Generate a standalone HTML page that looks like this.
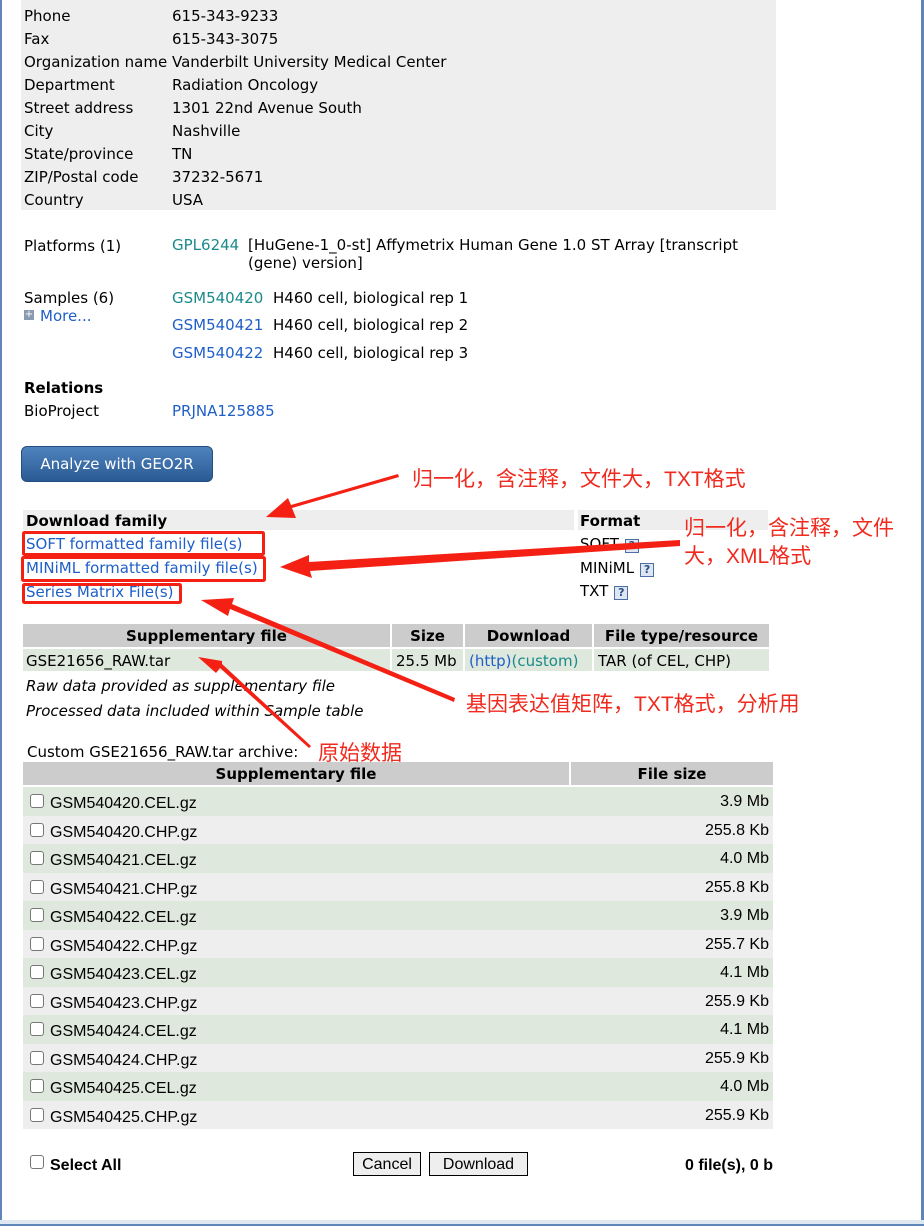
<!DOCTYPE html>
<html><head><meta charset="utf-8">
<style>
*{margin:0;padding:0;box-sizing:border-box}
body{width:924px;height:1226px;background:#fff;position:relative;overflow:hidden;font-family:"DejaVu Sans","Liberation Sans",sans-serif;font-size:15px;color:#000}
.a{position:absolute;white-space:nowrap;line-height:18px}
.t{color:#1a8a8a}.b{color:#1f5fc8}
.bx{position:absolute}
.cz{font-family:"Liberation Sans",sans-serif;font-size:16px}
.cb{position:absolute;width:14px;height:14px;border:1px solid #777;border-radius:3px;background:#fff}
.red{position:absolute;color:#f02a1e;font-family:"Liberation Sans","Noto Sans CJK SC",sans-serif;font-size:21px;white-space:nowrap;line-height:26px}
.q{display:inline-block;width:14px;height:14px;border:1px solid #4a6fa0;background:#dde6f2;color:#2d4e80;font-size:11px;line-height:12px;text-align:center;font-weight:bold;vertical-align:0px;margin-left:6px}
</style></head><body>
<div class="bx" style="left:0;top:0;width:2px;height:1226px;background:#5f86b8"></div>
<div class="bx" style="left:921px;top:0;width:3px;height:1226px;background:#5f86b8"></div>
<div class="bx" style="left:0;top:1220px;width:924px;height:6px;background:#dfe8f0;border-bottom:2px solid #5f86b8"></div>

<div class="bx" style="left:21px;top:0;width:755px;height:210px;background:#eeeeee"></div>
<div class="a" style="left:24px;top:7px">Phone</div><div class="a" style="left:172px;top:7px">615-343-9233</div>
<div class="a" style="left:24px;top:30px">Fax</div><div class="a" style="left:172px;top:30px">615-343-3075</div>
<div class="a" style="left:24px;top:53px">Organization name</div><div class="a" style="left:172px;top:53px">Vanderbilt University Medical Center</div>
<div class="a" style="left:24px;top:76px">Department</div><div class="a" style="left:172px;top:76px">Radiation Oncology</div>
<div class="a" style="left:24px;top:99px">Street address</div><div class="a" style="left:172px;top:99px">1301 22nd Avenue South</div>
<div class="a" style="left:24px;top:122px">City</div><div class="a" style="left:172px;top:122px">Nashville</div>
<div class="a" style="left:24px;top:145px">State/province</div><div class="a" style="left:172px;top:145px">TN</div>
<div class="a" style="left:24px;top:168px">ZIP/Postal code</div><div class="a" style="left:172px;top:168px">37232-5671</div>
<div class="a" style="left:24px;top:191px">Country</div><div class="a" style="left:172px;top:191px">USA</div>

<div class="a" style="left:24px;top:237px">Platforms (1)</div>
<div class="a t" style="left:172px;top:236px">GPL6244</div>
<div class="a" style="left:248px;top:236px">[HuGene-1_0-st] Affymetrix Human Gene 1.0 ST Array [transcript</div>
<div class="a" style="left:248px;top:254px">(gene) version]</div>

<div class="a" style="left:24px;top:289px">Samples (6)</div>
<div class="bx" style="left:24px;top:310px;width:10px;height:10px;background:#8a9ab0;color:#fff;font-size:10px;line-height:10px;text-align:center">+</div>
<div class="a b" style="left:40px;top:307px">More...</div>
<div class="a t" style="left:172px;top:289px">GSM540420</div><div class="a" style="left:273px;top:289px">H460 cell, biological rep 1</div>
<div class="a b" style="left:172px;top:316px">GSM540421</div><div class="a" style="left:273px;top:316px">H460 cell, biological rep 2</div>
<div class="a b" style="left:172px;top:344px">GSM540422</div><div class="a" style="left:273px;top:344px">H460 cell, biological rep 3</div>

<div class="a" style="left:24px;top:379px;font-weight:bold">Relations</div>
<div class="a" style="left:24px;top:402px">BioProject</div><div class="a b" style="left:172px;top:402px">PRJNA125885</div>

<div class="bx" style="left:21px;top:446px;width:192px;height:36px;border-radius:6px;background:linear-gradient(#4f83bd,#2a5a94);border:1px solid #244d80;color:#fff;text-align:center;line-height:34px;font-size:15px">Analyze with GEO2R</div>

<div class="bx" style="left:23px;top:510px;width:551px;height:20px;background:#eeeeee"></div>
<div class="bx" style="left:578px;top:510px;width:190px;height:20px;background:#eeeeee"></div>
<div class="a" style="left:26px;top:512px;font-weight:bold">Download family</div>
<div class="a" style="left:580px;top:512px;font-weight:bold">Format</div>
<div class="a b" style="left:26px;top:535px">SOFT formatted family file(s)</div>
<div class="a b" style="left:26px;top:559px">MINiML formatted family file(s)</div>
<div class="a b" style="left:26px;top:583px">Series Matrix File(s)</div>
<div class="a" style="left:580px;top:535px">SOFT<span class="q">?</span></div>
<div class="a" style="left:580px;top:559px">MINiML<span class="q">?</span></div>
<div class="a" style="left:580px;top:582px">TXT<span class="q">?</span></div>

<div class="bx" style="left:23px;top:624px;width:367px;height:23px;background:#cccccc"></div>
<div class="bx" style="left:392px;top:624px;width:71px;height:23px;background:#cccccc"></div>
<div class="bx" style="left:465px;top:624px;width:127px;height:23px;background:#cccccc"></div>
<div class="bx" style="left:594px;top:624px;width:175px;height:23px;background:#cccccc"></div>
<div class="a" style="left:23px;top:627px;width:367px;text-align:center;font-weight:bold">Supplementary file</div>
<div class="a" style="left:392px;top:627px;width:71px;text-align:center;font-weight:bold">Size</div>
<div class="a" style="left:465px;top:627px;width:127px;text-align:center;font-weight:bold">Download</div>
<div class="a" style="left:594px;top:627px;width:175px;text-align:center;font-weight:bold">File type/resource</div>
<div class="bx" style="left:23px;top:649px;width:367px;height:22px;background:#dfe8dc"></div>
<div class="bx" style="left:392px;top:649px;width:71px;height:22px;background:#dfe8dc"></div>
<div class="bx" style="left:465px;top:649px;width:127px;height:22px;background:#dfe8dc"></div>
<div class="bx" style="left:594px;top:649px;width:175px;height:22px;background:#dfe8dc"></div>
<div class="a" style="left:26px;top:652px">GSE21656_RAW.tar</div>
<div class="a" style="left:396px;top:652px">25.5 Mb</div>
<div class="a" style="left:469px;top:652px"><span class="b">(http)</span><span class="t">(custom)</span></div>
<div class="a" style="left:598px;top:652px">TAR (of CEL, CHP)</div>
<div class="a" style="left:26px;top:677px;font-style:italic">Raw data provided as supplementary file</div>
<div class="a" style="left:26px;top:702px;font-style:italic">Processed data included within Sample table</div>
<div class="a" style="left:27px;top:743px">Custom GSE21656_RAW.tar archive:</div>

<div class="bx" style="left:23px;top:762px;width:546px;height:23px;background:#cccccc"></div>
<div class="bx" style="left:571px;top:762px;width:202px;height:23px;background:#cccccc"></div>
<div class="a" style="left:23px;top:765px;width:546px;text-align:center;font-weight:bold">Supplementary file</div>
<div class="a" style="left:571px;top:765px;width:202px;text-align:center;font-weight:bold">File size</div>

<div id="rows"></div>
<script>
var f=[["GSM540420.CEL.gz","3.9 Mb"],["GSM540420.CHP.gz","255.8 Kb"],["GSM540421.CEL.gz","4.0 Mb"],["GSM540421.CHP.gz","255.8 Kb"],["GSM540422.CEL.gz","3.9 Mb"],["GSM540422.CHP.gz","255.7 Kb"],["GSM540423.CEL.gz","4.1 Mb"],["GSM540423.CHP.gz","255.9 Kb"],["GSM540424.CEL.gz","4.1 Mb"],["GSM540424.CHP.gz","255.9 Kb"],["GSM540425.CEL.gz","4.0 Mb"],["GSM540425.CHP.gz","255.9 Kb"]];
var h="";for(var i=0;i<12;i++){var y=787+i*28.5;h+='<div class="bx" style="left:23px;top:'+y+'px;width:750px;height:28.5px;background:'+(i%2?'#eeeeee':'#dfe8dc')+'"></div><div class="cb" style="left:30px;top:'+(y+7)+'px"></div><div class="a cz" style="left:50px;top:'+(y+8)+'px">'+f[i][0]+'</div><div class="a cz" style="left:571px;width:198px;text-align:right;top:'+(y+6)+'px">'+f[i][1]+'</div>';}
document.getElementById("rows").innerHTML=h;
</script>

<div class="cb" style="left:30px;top:1155px"></div>
<div class="a cz" style="left:50px;top:1157px;font-weight:bold">Select All</div>
<div class="bx cz" style="left:353px;top:1152px;width:68px;height:24px;border:1px solid #000;background:#eee;text-align:center;line-height:24px">Cancel</div>
<div class="bx cz" style="left:429px;top:1152px;width:99px;height:24px;border:1px solid #000;background:#eee;text-align:center;line-height:24px">Download</div>
<div class="a cz" style="left:600px;width:173px;text-align:right;top:1157px;font-weight:bold">0 file(s), 0 b</div>

<svg class="bx" style="left:0;top:0" width="924" height="1226">
<g fill="none" stroke="#f42014" stroke-width="3">
<rect x="23.5" y="532.5" width="240" height="22" rx="1"/>
<rect x="22.5" y="557.5" width="242" height="23" rx="1"/>
<rect x="23.5" y="584.5" width="157" height="18" rx="1"/>
</g>
<g fill="#f42014">
<polygon points="398,474 399,477 292,508 296,518 266,517 288,498 291,505"/>
<polygon points="680,540 680,546 310,571 312,578 280,567 309,555 309,562"/>
<polygon points="455,698 454,702 230,609 228,616 201,600 234,598 232,604"/>
<polygon points="311,746 309,748 220,668 216,673 198,657 222,661 222,664"/>
</g>
</svg>
<div class="red" style="left:412px;top:467px">归一化，含注释，文件大，TXT格式</div>
<div class="red" style="left:684px;top:516px">归一化，含注释，文件</div>
<div class="red" style="left:684px;top:544px">大，XML格式</div>
<div class="red" style="left:466px;top:692px">基因表达值矩阵，TXT格式，分析用</div>
<div class="red" style="left:318px;top:741px">原始数据</div>
</body></html>
